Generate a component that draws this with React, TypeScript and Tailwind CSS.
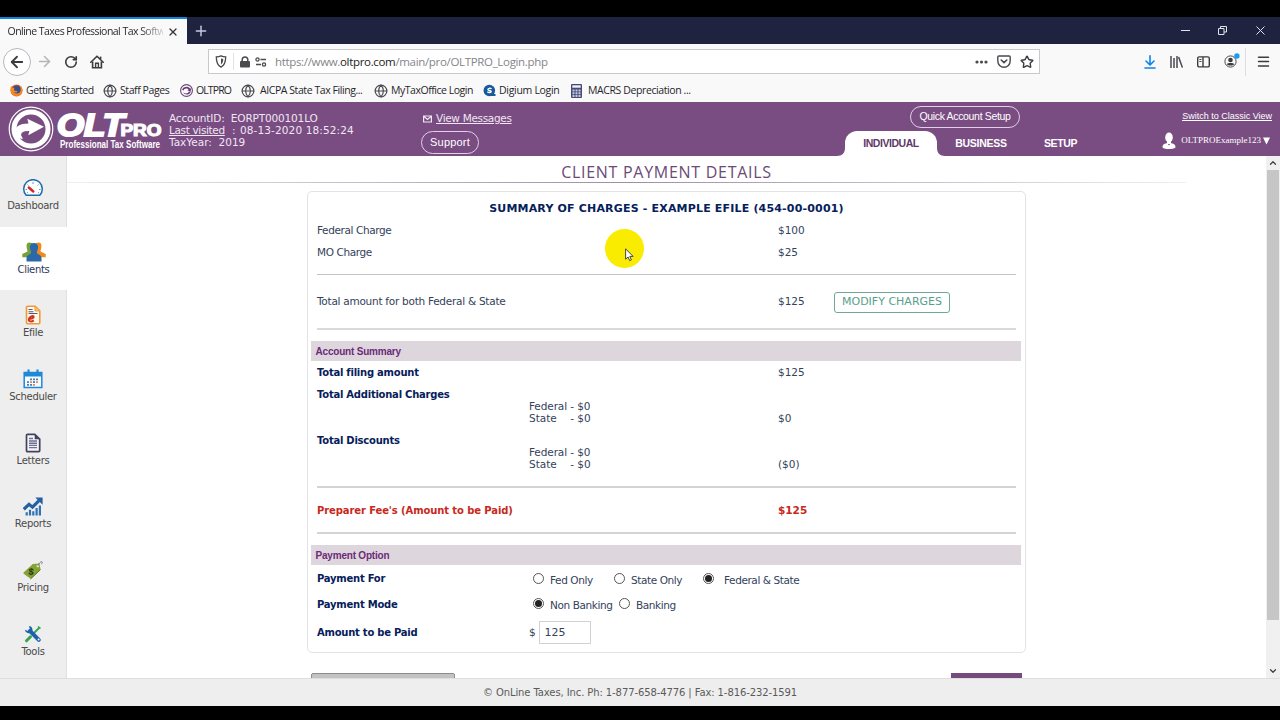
import type { ReactNode } from "react";
import {
  ArrowLeft,
  ArrowRight,
  ChevronDown,
  ChevronUp,
  Globe,
  Menu,
  Plus,
  RotateCw,
  Star,
  X,
} from "lucide-react";

const verdana = "font-['DejaVu_Sans',sans-serif]";
const arial = "font-['Liberation_Sans',sans-serif]";
const segoe = "font-['Open_Sans',sans-serif]";

/* ---------- browser icons ---------- */

function HomeIcon() {
  return (
    <svg width="14" height="14" viewBox="0 0 14 14" fill="none" stroke="#3c3c40" strokeWidth="1.6">
      <path d="M.8 7.2 7 1.2l6.2 6" strokeLinecap="round" strokeLinejoin="round" />
      <path d="M2.6 6.5v6.2h8.8V6.5" />
      <path d="M5.6 12.5V8.2h2.8v4.3" strokeWidth="1.4" />
      <path d="M10.6 4V1.6" />
    </svg>
  );
}

function ShieldIcon() {
  return (
    <svg width="12" height="13" viewBox="0 0 12 13" fill="none" stroke="#4a4a4f" strokeWidth="1.3">
      <path d="M6 .8c1.4.7 3 1 4.7 1.1 0 4.6-.7 8-4.7 10.2C2 9.9 1.3 6.5 1.3 1.9 3 1.8 4.6 1.5 6 .8Z" />
      <path d="M6 3.5c.8.3 1.5.5 2.3.5-.1 2.5-.7 4.3-2.3 5.5Z" fill="#4a4a4f" stroke="none" />
    </svg>
  );
}

function LockIcon() {
  return (
    <svg width="10" height="12" viewBox="0 0 10 12">
      <path d="M2.2 5.5V3.7a2.8 2.8 0 0 1 5.6 0v1.8" fill="none" stroke="#4a4a4f" strokeWidth="1.5" />
      <rect y="5" width="10" height="6.5" rx="1" fill="#4a4a4f" />
    </svg>
  );
}

function PermissionsIcon() {
  return (
    <svg width="12" height="10" viewBox="0 0 12 10" fill="none" stroke="#4a4a4f" strokeWidth="1.3">
      <circle cx="2.5" cy="2.5" r="1.6" />
      <path d="M5.5 2.5H11M1 7.5h5" />
      <circle cx="9" cy="7.5" r="1.6" />
    </svg>
  );
}

function PocketIcon() {
  return (
    <svg width="14" height="13" viewBox="0 0 14 13" fill="none" stroke="#4a4a4f" strokeWidth="1.4" strokeLinecap="round" strokeLinejoin="round">
      <path d="M1.8 1h10.4c.6 0 1 .4 1 1v4a6.2 6.2 0 0 1-12.4 0V2c0-.6.4-1 1-1Z" />
      <path d="M4.2 5 7 7.7 9.8 5" strokeWidth="1.6" />
    </svg>
  );
}

function DownloadIcon() {
  return (
    <svg width="12" height="14" viewBox="0 0 12 14" fill="none" stroke="#0a84e6" strokeWidth="1.6" strokeLinecap="round" strokeLinejoin="round">
      <path d="M6 .8v9M2 6l4 4 4-4M1 13h10" />
    </svg>
  );
}

function LibraryIcon() {
  return (
    <svg width="13" height="12" viewBox="0 0 13 12" stroke="#4a4a4f" strokeWidth="1.5">
      <path d="M1 0v12M4 2v10M7 0v12M8.6 1l3.8 10.6" />
    </svg>
  );
}

function SidebarIcon() {
  return (
    <svg width="13" height="12" viewBox="0 0 13 12" fill="none" stroke="#3c3c40" strokeWidth="1.4">
      <rect x=".7" y=".9" width="11.6" height="10" rx="1.5" />
      <path d="M6 1v10" />
      <path d="M2.3 3.5h2.2M2.3 5.5h2.2" strokeWidth=".9" />
    </svg>
  );
}

function AccountIcon() {
  return (
    <svg width="17" height="16" viewBox="0 0 17 16">
      <circle cx="7.5" cy="8.5" r="5.6" fill="none" stroke="#4a4a4f" strokeWidth="1" />
      <circle cx="7.5" cy="7" r="2.3" fill="#3c3c40" />
      <path d="M3.7 11c.8-1.5 6.8-1.5 7.6 0-1.4 2.1-6.2 2.1-7.6 0Z" fill="#3c3c40" />
      <circle cx="13.9" cy="3" r="2.7" fill="#14a0f0" />
    </svg>
  );
}

function FirefoxIcon() {
  return (
    <svg width="13" height="13" viewBox="0 0 13 13">
      <circle cx="6.5" cy="6.5" r="6" fill="#e8552a" />
      <circle cx="7" cy="5.5" r="4" fill="#31508f" />
      <path d="M1 2c1 2 2.2 1.8 3.7 2.5-1 .7-.8 2 .3 2.3 1 .3 2 .2 2.7.6-1.3 1.8-3.2 1.2-3.8.7 1.2 2.7 6 2.3 6.7-1.5.4-2.4-.6-4.2-2-5.1 3 .5 4.2 3.1 3.8 5.6-.7 4-4.8 5.9-8.2 4.5C.8 10.2-.3 6 1 2Z" fill="#f58a1f" />
    </svg>
  );
}

function OltIcon() {
  return (
    <svg width="13" height="13" viewBox="0 0 44 44">
      <circle cx="22" cy="22" r="20" fill="#fff" stroke="#6d4a7c" strokeWidth="4" />
      <path d="M7 20C10 8 28 5 34 15l4-1-2 11-11-3 4-3C24 12 14 15 12 22Z" fill="#6d3f7a" />
      <path d="M37 25C34 37 17 39 10 29c8 5 18 3 20-4Z" fill="#6d3f7a" />
    </svg>
  );
}

function DigiumIcon() {
  return (
    <svg width="13" height="13" viewBox="0 0 13 13">
      <circle cx="6.3" cy="6.5" r="5.8" fill="#17599a" />
      <path d="M8 10h4.5v2H8z" fill="#17599a" />
      <path d="M8.6 4.8C7.2 3.8 4.8 4.3 5 5.700c.3 1.100 3.200.6 3.200 1.800 0 1.300-2.600 1.300-3.900.3" fill="none" stroke="#fff" strokeWidth="1.4" />
    </svg>
  );
}

function CalculatorIcon() {
  return (
    <svg width="11" height="14" viewBox="0 0 11 14">
      <rect width="11" height="14" rx="1" fill="#454a78" />
      <rect x="1.3" y="1.3" width="8.4" height="2.4" fill="#f0f0f8" />
      <path d="M1.5 5.500h2v2h-2zM4.500 5.500h2v2h-2zM7.500 5.500h2v2h-2zM1.500 8.300h2v2h-2zM4.500 8.300h2v2h-2zM7.500 8.300h2v2h-2zM1.500 11h2v2h-2zM4.500 11h2v2h-2zM7.500 11h2v2h-2z" fill="#c9cbe0" />
    </svg>
  );
}

/* ---------- sidebar icons ---------- */

function DashboardIcon() {
  return (
    <svg width="22" height="18" viewBox="0 0 22 18">
      <path d="M4.2 16.3A9.3 9.3 0 1 1 17.8 16.3Z" fill="#fdfdfd" stroke="#1f6cab" strokeWidth="1.5" strokeLinejoin="round" />
      <path d="M11 3v2M5.5 5.5l1 1M16.5 5.5l-1 1M3.5 10.5h1.6M17 10.5h1.6M5 14l1-.6M17 14l-1-.6" stroke="#5a9acb" strokeWidth="1" />
      <path d="m6.8 8.5 4.5 4" stroke="#d3262b" strokeWidth="2.4" strokeLinecap="round" />
    </svg>
  );
}

function ClientsIcon() {
  return (
    <svg width="24" height="20" viewBox="0 0 24 20">
      <path d="M8.5.8C5.5-.2 4.3 2 4.6 4.7c0 1.8.9 3 .9 4.8L.3 12v3.2H10V1Z" fill="#7a9f35" />
      <path d="M15.5.8c3-1 4.2 1.2 3.9 3.9 0 1.8-.9 3-.9 4.8l5.2 2.500v3.200H14V1Z" fill="#f08a1c" />
      <path d="M12 1c3.200 0 4.400 2.300 4 5.200-.2 1.900-1.200 2.800-1.200 4.500 0 1.600 4.700 2 4.700 5V19.500h-15v-3.800c0-3 4.700-3.400 4.700-5C9.200 9 8.200 8.100 8 6.200 7.600 3.300 8.800 1 12 1Z" fill="#2a68a8" />
    </svg>
  );
}

function EfileIcon() {
  return (
    <svg width="16" height="20" viewBox="0 0 16 20">
      <path d="M2.5 1.3h7.7l4.6 4.6v11.8c0 .6-.4 1-1 1H2.5a1 1 0 0 1-1-1V2.3c0-.6.4-1 1-1Z" fill="#fff8ec" stroke="#ef9a3a" strokeWidth="1.6" />
      <path d="M10 1.5V6h4.5" fill="#f6c27e" stroke="#ef9a3a" />
      <path d="M3.5 4.5h4M3.5 6.7h5M3.5 8.5h9" stroke="#55597a" strokeWidth="1.1" />
      <path d="M3 13.9c3.3.1 6-.8 5.7-2.3-.4-1.6-4.8 0-4.9 3-.1 2.4 3 2.2 5 .8" fill="none" stroke="#cf3222" strokeWidth="1.9" />
    </svg>
  );
}

function SchedulerIcon() {
  return (
    <svg width="20" height="20" viewBox="0 0 20 20">
      <rect x="1.2" y="3.5" width="17.6" height="15" fill="#f6fbff" stroke="#2188d8" strokeWidth="1.5" />
      <path d="M1 3h18v4.5H1z" fill="#2188d8" />
      <path d="M5.5.5v4.3M14.5.5v4.3" stroke="#2188d8" strokeWidth="2.2" />
      <path d="M7 9.5h2v1.7H7zM10 9.5h2v1.7h-2zM13 9.5h2v1.7h-2zM4 12.3h2V14H4zM10 12.3h2V14h-2zM4 15.1h2v1.7H4zM7 15.1h2v1.7H7z" fill="#4b7fb2" />
      <path d="M7 12.3h2V14H7zM13 12.3h2V14h-2zM10 15.1h2v1.7h-2z" fill="#e08a5e" />
    </svg>
  );
}

function LettersIcon() {
  return (
    <svg width="16" height="20" viewBox="0 0 16 20">
      <path d="M2.5 1.4h7.3l4.9 4.8v11.4c0 .6-.4 1-1 1H2.5a1 1 0 0 1-1-1V2.4c0-.6.4-1 1-1Z" fill="#f3f3f8" stroke="#44425f" strokeWidth="1.7" />
      <path d="M9.7 1.5v4.8h4.8Z" fill="#44425f" />
      <path d="M4 5.5h4M4 8h8M4 10.2h8M4 12.4h8M4 14.6h8" stroke="#6f7190" strokeWidth="1.4" />
    </svg>
  );
}

function ReportsIcon() {
  return (
    <svg width="20" height="19" viewBox="0 0 20 19">
      <path d="M.8 12.3 6 7.3l3.5 2.900L16 3.600" fill="none" stroke="#245fa5" strokeWidth="3.2" />
      <path d="M12.3.5H19.600v7.300Z" fill="#245fa5" />
      <path d="M3.7 18.500v-3.200M7 18.500v-5.700M10.300 18.500v-4.300M13.600 18.500V11M16.900 18.500V8.500" stroke="#3171b6" strokeWidth="2.2" />
    </svg>
  );
}

function PricingIcon() {
  return (
    <svg width="20" height="19" viewBox="0 0 20 19">
      <path d="M.8 11.2 9.8 3l6.7-.4 1 6L8.5 17.3c-.6.5-1.2.6-1.700 0L.7 12.800c-.4-.6-.4-1 .1-1.600Z" fill="#86a436" />
      <path d="m7.500 18 10-9.400" stroke="#5d741f" strokeWidth="1" />
      <circle cx="14.800" cy="5" r="1.200" fill="#eee" />
      <path d="M14.800 5c1-2.500 2.500-4.400 4-4.300.9.200.5 1.900-.5 2.400" fill="none" stroke="#666" strokeWidth=".8" />
      <text x="5.400" y="14" fontSize="9.500" fontWeight="bold" fontFamily="Liberation Sans" fill="#273010" transform="rotate(8 8 11)">$</text>
    </svg>
  );
}

function ToolsIcon() {
  return (
    <svg width="18" height="18" viewBox="0 0 18 18" fill="none">
      <path d="m2.500 15.800 4-4" stroke="#35a64a" strokeWidth="3" strokeLinecap="round" />
      <path d="m9.500 8.500 6-6" stroke="#35a64a" strokeWidth="1.800" />
      <path d="m14 1.500 2.500 2" stroke="#35a64a" strokeWidth="1.600" />
      <path d="m6 6 8.800 8.800" stroke="#1d62ad" strokeWidth="4" strokeLinecap="round" />
      <path d="M5 1C9 1.300 9.300 6.200 7.300 7.600S1.200 8.200.9 4.800l3 1.100L5.800 4Z" fill="#1d62ad" />
      <circle cx="14.600" cy="14.600" r="1" fill="#fff" />
    </svg>
  );
}

/* ---------- browser chrome ---------- */

const bookmarks: { label: string; icon: ReactNode; cell: string; text: string }[] = [
  { label: "Getting Started", icon: <FirefoxIcon />, cell: "w-[94px] pl-[10px] gap-[3px]", text: "tracking-[-0.44px]" },
  { label: "Staff Pages", icon: <Globe size={14} strokeWidth={2} />, cell: "w-[76px] pl-[9px] gap-[3px]", text: "tracking-[-0.42px]" },
  { label: "OLTPRO", icon: <OltIcon />, cell: "w-[62px] pl-[10px] gap-[3px]", text: "tracking-[-0.9px]" },
  { label: "AICPA State Tax Filing...", icon: <Globe size={14} strokeWidth={2} />, cell: "w-[133px] pl-[9px] gap-[5px]", text: "tracking-[-0.43px]" },
  { label: "MyTaxOffice Login", icon: <Globe size={14} strokeWidth={2} />, cell: "w-[108px] pl-[9px] gap-[3px]", text: "tracking-[-0.47px]" },
  { label: "Digium Login", icon: <DigiumIcon />, cell: "w-[87px] pl-[10px] gap-[3px]", text: "tracking-[-0.3px]" },
  { label: "MACRS Depreciation ...", icon: <CalculatorIcon />, cell: "w-[140px] pl-[11px] gap-[6px]", text: "tracking-[-0.4px]" },
];

function TabStrip() {
  return (
    <div className="flex h-[27px] bg-[#20233f]">
      <div className="flex w-[187px] items-center border-t-2 border-[#0a84e0] bg-[#f9f9fa] pl-[7.5px]">
        <div className={`w-[155px] overflow-hidden whitespace-nowrap bg-linear-to-r from-[#222] from-85% to-[#22222230] bg-clip-text pt-px text-[10.5px] tracking-[-0.53px] text-transparent ${segoe}`}>
          Online Taxes Professional Tax Softw
        </div>
        <X size={12} strokeWidth={2.4} className="ml-[4px] text-[#333]" />
      </div>
      <div className="flex w-[27px] items-center justify-center text-[#c5c9e0]">
        <Plus size={16} strokeWidth={2.2} />
      </div>
      <div className="flex flex-1 items-center justify-end text-[#e0e2ee]">
        <div className="flex w-[37px] justify-center">
          <svg width="9" height="9"><path d="M0 4.5h9" stroke="currentColor" /></svg>
        </div>
        <div className="flex w-[37px] justify-center">
          <svg width="9" height="9" fill="none" stroke="currentColor"><path d="M.5 2.5H6v6H.5zM2.5 2.5v-2h6V6H6" /></svg>
        </div>
        <div className="flex w-[39px] justify-center">
          <svg width="9" height="9"><path d="m.5.5 8 8m0-8-8 8" stroke="currentColor" /></svg>
        </div>
      </div>
    </div>
  );
}

function Toolbar() {
  return (
    <div className="flex h-[35px] items-center text-[#3c3c40]">
      <div className="flex w-[33px] justify-center">
        <div className="flex size-[28px] items-center justify-center rounded-full border border-[#b8b8bc] bg-white">
          <ArrowLeft size={18} strokeWidth={2.4} />
        </div>
      </div>
      <div className="flex w-[22px] justify-center text-[#b5b5b8]"><ArrowRight size={17} strokeWidth={2.2} /></div>
      <div className="flex w-[32px] justify-center"><RotateCw size={14} strokeWidth={2.8} /></div>
      <div className="flex w-[20px] justify-center"><HomeIcon /></div>
      <div className="ml-[101px] flex h-[25px] w-[832px] items-center border border-[#c9c9cc] bg-white">
        <div className="flex w-[24px] justify-center"><ShieldIcon /></div>
        <div className="h-[17px] w-px bg-[#e2e2e4]" />
        <div className="flex w-[21px] justify-center"><LockIcon /></div>
        <div className="flex w-[12px] justify-center"><PermissionsIcon /></div>
        <div className={`ml-[8px] flex-1 whitespace-nowrap pt-px text-[11.5px] tracking-[-0.33px] text-[#85858a] ${segoe}`}>
          https://www.<span className="text-[#1c1c20]">oltpro.com</span>/main/pro/OLTPRO_Login.php
        </div>
        <div className="flex w-[22px] justify-center">
          <svg width="13" height="4" fill="#4a4a4f"><circle cx="2" cy="2" r="1.6" /><circle cx="6.5" cy="2" r="1.6" /><circle cx="11" cy="2" r="1.6" /></svg>
        </div>
        <div className="flex w-[24px] justify-center"><PocketIcon /></div>
        <div className="mr-px flex w-[22px] justify-center"><Star size={14} strokeWidth={2.4} /></div>
      </div>
      <div className="ml-[97px] flex w-[26px] justify-center"><DownloadIcon /></div>
      <div className="flex w-[27px] justify-center"><LibraryIcon /></div>
      <div className="flex w-[26px] justify-center"><SidebarIcon /></div>
      <div className="flex w-[29px] justify-center pb-[2px] pl-[2px]"><AccountIcon /></div>
      <div className="h-[28px] w-px bg-[#dedee0]" />
      <div className="flex flex-1 justify-center"><Menu size={15} strokeWidth={2.4} /></div>
    </div>
  );
}

function Bookmarks() {
  return (
    <div className={`flex h-[23px] items-center text-[10.5px] text-[#26262a] ${segoe}`}>
      {bookmarks.map((b) => (
        <div key={b.label} className={`flex items-center whitespace-nowrap ${b.cell}`}>
          <span className="shrink-0 text-[#4a4a4f]">{b.icon}</span>
          <span className={b.text}>{b.label}</span>
        </div>
      ))}
    </div>
  );
}

/* ---------- app header ---------- */

function Logo() {
  return (
    <svg width="158" height="50" viewBox="0 0 158 50" fill="#fff">
      <circle cx="24" cy="24" r="21.8" fill="none" stroke="#fff" strokeWidth="1.2" />
      <circle cx="24" cy="24" r="17" fill="none" stroke="#fff" strokeWidth="5" />
      <path d="M7 27c1-5.5 6-8.6 14.5-8.6l-1.2-4.6L37 21.7l-15.7 8.6 1-4.3c-5-.4-8 .8-8.3 4L16 34c-5-.5-8-3-9-7Z" />
      <text x="50" y="31" fontFamily="Liberation Sans" fontSize="31" fontWeight="bold" fontStyle="italic" stroke="#fff" strokeWidth="2.2" textLength="67" lengthAdjust="spacingAndGlyphs">OLT</text>
      <text x="113.5" y="30.5" fontFamily="Liberation Sans" fontSize="16" fontWeight="bold" stroke="#fff" strokeWidth="1.2" textLength="41" lengthAdjust="spacingAndGlyphs">PRO</text>
      <text x="53" y="42.5" fontFamily="Liberation Sans Narrow, Liberation Sans" fontSize="10.5" fontWeight="bold" textLength="100" lengthAdjust="spacingAndGlyphs">Professional Tax Software</text>
    </svg>
  );
}

function TabFlare({ flip = false }: { flip?: boolean }) {
  return (
    <svg width="8" height="8" className={flip ? "-scale-x-100" : ""}>
      <path d="M8 0v8H0c5 0 8-3 8-8Z" fill="#fff" />
    </svg>
  );
}

function Header() {
  return (
    <header className="flex h-[54px] bg-[#794d82] text-white">
      <div className="w-[169px] pt-[3px] pl-[7px]"><Logo /></div>
      <div className={`w-[252px] whitespace-pre pt-[10px] text-[10.5px] leading-[12px] text-[#f1e6f3] ${verdana}`}>
        <div className="tracking-[-0.16px]">AccountID:  EORPT000101LO</div>
        <div className="flex">
          <span className="w-[63px] tracking-[-0.35px]"><span className="underline">Last visited</span></span>
          <span className="w-[8px]">:</span>
          <span className="tracking-[0.12px]">08-13-2020 18:52:24</span>
        </div>
        <div>TaxYear:  2019</div>
      </div>
      <div className="w-[424px] pt-[10px]">
        <div className={`flex h-[12px] w-fit items-center gap-[4px] pt-px pl-[2px] text-[10.5px] tracking-[-0.32px] text-[#f1e6f3] ${verdana}`}>
          <svg width="9" height="8" fill="none" stroke="currentColor" strokeWidth="1.2"><path d="M.6 1h7.8v6H.6zM1 1.5l3.500 3L8 1.500" /></svg>
          <span className="underline">View Messages</span>
        </div>
        <button className={`mt-[7px] h-[23px] w-[58px] rounded-full border border-[#e3cfe8] text-[11px] tracking-[0.2px] ${arial}`}>Support</button>
      </div>
      <div className="w-[260px]">
        <button className={`mt-[4px] ml-[65px] block h-[22px] w-[110px] whitespace-nowrap rounded-full border border-[#e3cfe8] text-[10.5px] tracking-[-0.33px] ${arial}`}>Quick Account Setup</button>
        <nav className={`mt-[3px] flex h-[25px] items-center text-[10.5px] font-bold ${arial}`}>
          <div className="-ml-[8px] flex h-full items-end">
            <TabFlare />
            <div className="flex h-full w-[92px] items-center justify-center rounded-t-[12px] bg-white tracking-[-0.45px] text-[#5f3a68]">INDIVIDUAL</div>
            <TabFlare flip />
          </div>
          <div className="w-[72px] text-center tracking-[-0.25px]">BUSINESS</div>
          <div className="w-[87px] text-center tracking-[-0.4px]">SETUP</div>
        </nav>
      </div>
      <div className="flex flex-1 flex-col items-end pt-[7px] pr-[8px]">
        <a className={`h-[14px] text-[9px] leading-[14px] whitespace-nowrap underline ${arial}`}>Switch to Classic View</a>
        <div className="mt-[9px] mr-[2px] flex items-center whitespace-nowrap font-['Liberation_Serif',serif] text-[9px]">
          <svg width="14" height="18" viewBox="0 0 14 18" fill="#fff">
            <ellipse cx="7" cy="5.5" rx="3.8" ry="5" />
            <path d="M5 9h4v3H5zM.5 15c0-3 3-3.500 4.500-4l2 2.500L9 11c1.500.5 4.500 1 4.500 4 0 2.800-13 2.800-13 0Z" />
          </svg>
          <span className="ml-[5px]">OLTPROExample123</span>
          <svg width="7" height="8" className="ml-[2px]"><path d="M0 .5h7l-3.500 7z" fill="#fff" /></svg>
        </div>
      </div>
    </header>
  );
}

/* ---------- sidebar ---------- */

const menu: { label: string; icon: ReactNode }[] = [
  { label: "Dashboard", icon: <DashboardIcon /> },
  { label: "Clients", icon: <ClientsIcon /> },
  { label: "Efile", icon: <EfileIcon /> },
  { label: "Scheduler", icon: <SchedulerIcon /> },
  { label: "Letters", icon: <LettersIcon /> },
  { label: "Reports", icon: <ReportsIcon /> },
  { label: "Pricing", icon: <PricingIcon /> },
  { label: "Tools", icon: <ToolsIcon /> },
];

function Sidebar() {
  return (
    <aside className={`w-[67px] shrink-0 border-r border-[#e0e0e0] bg-[#eeeeee] pt-[7px] text-[10px] tracking-[-0.3px] text-[#4a4a4a] ${verdana}`}>
      {menu.map((m) => (
        <div
          key={m.label}
          className={`flex h-[63.7px] flex-col items-center ${m.label === "Clients" ? "-mr-px bg-white text-[#2b3560]" : ""}`}
        >
          <div className="mt-[15px] flex h-[20px] items-center">{m.icon}</div>
          <div className="pt-px leading-[14px]">{m.label}</div>
        </div>
      ))}
    </aside>
  );
}

/* ---------- payment card ---------- */

function Row({ label, mid, value, extra, className }: {
  label?: ReactNode;
  mid?: ReactNode;
  value?: ReactNode;
  extra?: ReactNode;
  className: string;
}) {
  return (
    <div className={`grid grid-cols-[212px_249px_56px_1fr] items-center whitespace-pre pl-[9px] ${className}`}>
      <div className="tracking-[-0.26px]">{label}</div>
      <div>{mid}</div>
      <div>{value}</div>
      <div>{extra}</div>
    </div>
  );
}

function Band({ children }: { children: ReactNode }) {
  return (
    <div className={`mr-[4px] mt-[11px] ml-[3px] flex h-[20px] items-center bg-[#ddd6dd] pl-[4.5px] text-[10px] font-bold tracking-[-0.2px] text-[#6c2b78] ${arial}`}>
      {children}
    </div>
  );
}

function Label({ children }: { children: ReactNode }) {
  return <b className="text-[10px] tracking-[-0.24px] text-[#06205a]">{children}</b>;
}

function Radio({ checked = false }: { checked?: boolean }) {
  return (
    <span className="flex size-[11px] shrink-0 items-center justify-center rounded-full border border-[#555] bg-white">
      {checked && <span className="size-[7px] rounded-full bg-[#222]" />}
    </span>
  );
}

function Option({ label, checked, className }: { label: string; checked?: boolean; className: string }) {
  return (
    <label className={`flex shrink-0 tracking-[-0.4px] ${className}`}>
      <Radio checked={checked} />
      <span className="pt-[2px] leading-[11px]">{label}</span>
    </label>
  );
}

const Hr = ({ className }: { className: string }) => <div className={`mr-[9px] ml-[9px] ${className}`} />;

function ChargesCard() {
  return (
    <section className={`mt-[8px] ml-[240px] h-[462px] w-[719px] rounded-[5px] border border-[#e3e3e5] pt-[6px] text-[10.5px] text-[#33425c] ${verdana}`}>
      <h2 className="flex h-[22px] items-center justify-center text-[11px] font-bold tracking-[0.18px] text-[#06205a]">
        SUMMARY OF CHARGES - EXAMPLE EFILE (454-00-0001)
      </h2>
      <Row className="h-[22px]" label={<span className="tracking-[-0.38px]">Federal Charge</span>} value="$100" />
      <Row className="h-[22px]" label={<span className="tracking-[-0.38px]">MO Charge</span>} value="$25" />
      <Hr className="mt-[10px] h-px bg-[#c4c4c4]" />
      <Row
        className="h-[53px] pt-px"
        label="Total amount for both Federal & State"
        value="$125"
        extra={
          <button className="block h-[21px] w-[116px] rounded-[3px] border border-[#6fa899] pt-px text-[11px] text-[#58a08c]">
            MODIFY CHARGES
          </button>
        }
      />
      <Hr className="h-[2px] bg-[#dadada]" />
      <Band>Account Summary</Band>
      <Row className="mt-px h-[22px]" label={<Label>Total filing amount</Label>} value="$125" />
      <Row className="mt-[4px] h-[12px] leading-[12px]" label={<Label>Total Additional Charges</Label>} />
      <Row className="h-[12px] leading-[12px]" mid={<span className="tracking-[-0.1px]">Federal - $0</span>} />
      <Row className="h-[12px] leading-[12px]" mid={"State    - $0"} value="$0" />
      <Row className="mt-[10px] h-[12px] leading-[12px]" label={<Label>Total Discounts</Label>} />
      <Row className="h-[12px] leading-[12px]" mid={<span className="tracking-[-0.1px]">Federal - $0</span>} />
      <Row className="h-[12px] leading-[12px]" mid={"State    - $0"} value="($0)" />
      <Hr className="mt-[16px] h-[2px] bg-[#d4d4d4]" />
      <Row className="h-[44px] pt-[2px] font-bold text-[#c8281c]" label={<span className="text-[10px] tracking-[-0.1px]">Preparer Fee's (Amount to be Paid)</span>} value="$125" />
      <Hr className="h-[2px] bg-[#d4d4d4]" />
      <Band>Payment Option</Band>
      <Row
        className="mt-px h-[26px]"
        label={<Label>Payment For</Label>}
        mid={
          <div className="flex pl-[4px]">
            <Option label="Fed Only" className="w-[81px] gap-[6px]" />
            <Option label="State Only" className="w-[89px] gap-[6px]" />
            <Option label="Federal & State" checked className="gap-[10px]" />
          </div>
        }
      />
      <Row
        className="h-[25px]"
        label={<Label>Payment Mode</Label>}
        mid={
          <div className="flex pl-[4px]">
            <Option label="Non Banking" checked className="w-[86px] gap-[6px]" />
            <Option label="Banking" className="w-[80px] gap-[6px]" />
          </div>
        }
      />
      <Row
        className="h-[31px]"
        label={<Label>Amount to be Paid</Label>}
        mid={
          <div className="flex items-center">
            <span className="w-[10px]">$</span>
            <input
              defaultValue="125"
              className="h-[23px] w-[52px] border border-[#d2d2d2] bg-white pl-[4.5px] text-[11px] text-[#33425c] outline-none"
            />
          </div>
        }
      />
    </section>
  );
}

function Scrollbar() {
  return (
    <div className="flex w-[14px] shrink-0 flex-col items-center bg-[#f0f0f0] text-[#404040]">
      <div className="flex h-[14px] items-center"><ChevronUp size={10} strokeWidth={3} /></div>
      <div className="h-[450px] w-[12px] bg-[#c6c6c6]" />
      <div className="mt-auto flex h-[14px] items-center"><ChevronDown size={10} strokeWidth={3} /></div>
    </div>
  );
}

export default function App() {
  return (
    <div className="relative flex h-[720px] w-[1280px] flex-col overflow-hidden bg-black pt-[17px] pb-[14px]">
      <TabStrip />
      <div className="h-[58px] bg-[#f9f9fa]">
        <Toolbar />
        <Bookmarks />
      </div>
      <Header />
      <div className="flex h-[522px] overflow-hidden bg-white">
        <Sidebar />
        <main className="flex-1 overflow-hidden">
          <h1 className={`flex h-[26px] items-center justify-center pt-[6px] text-[16px] tracking-[0.72px] text-[#6b4a78] ${segoe}`}>
            CLIENT PAYMENT DETAILS
          </h1>
          <div className="mr-[80px] h-px bg-linear-to-r from-[#f0f0f0] via-[#9c8fa6] to-[#f0f0f0]" />
          <ChargesCard />
          <div className="mt-[20px] ml-[244px] flex w-[711px] justify-between">
            <div className="h-[20px] w-[144px] rounded-[2px] border border-[#8d8d8d] bg-[#c3c3c3]" />
            <div className="h-[20px] w-[71px] bg-[#754b7f]" />
          </div>
        </main>
        <Scrollbar />
      </div>
      <footer className={`flex h-[28px] items-center justify-center border-t border-[#dedede] bg-[#eeeeee] text-[10px] tracking-[-0.1px] text-[#5a5a5a] ${verdana}`}>
        © OnLine Taxes, Inc. Ph: 1-877-658-4776 | Fax: 1-816-232-1591
      </footer>

      {/* pointer highlight */}
      <div className="absolute top-[229px] left-[605px] size-[39px] rounded-full bg-[#f9ec00]">
        <svg width="9" height="14" viewBox="0 0 9 14" className="mt-[19px] ml-[20px]">
          <path d="M.6.8v10.400l2.500-2.200 1.600 3.700 1.700-.8-1.600-3.500h3.300Z" fill="#fff" stroke="#333" strokeWidth=".9" />
        </svg>
      </div>
    </div>
  );
}
